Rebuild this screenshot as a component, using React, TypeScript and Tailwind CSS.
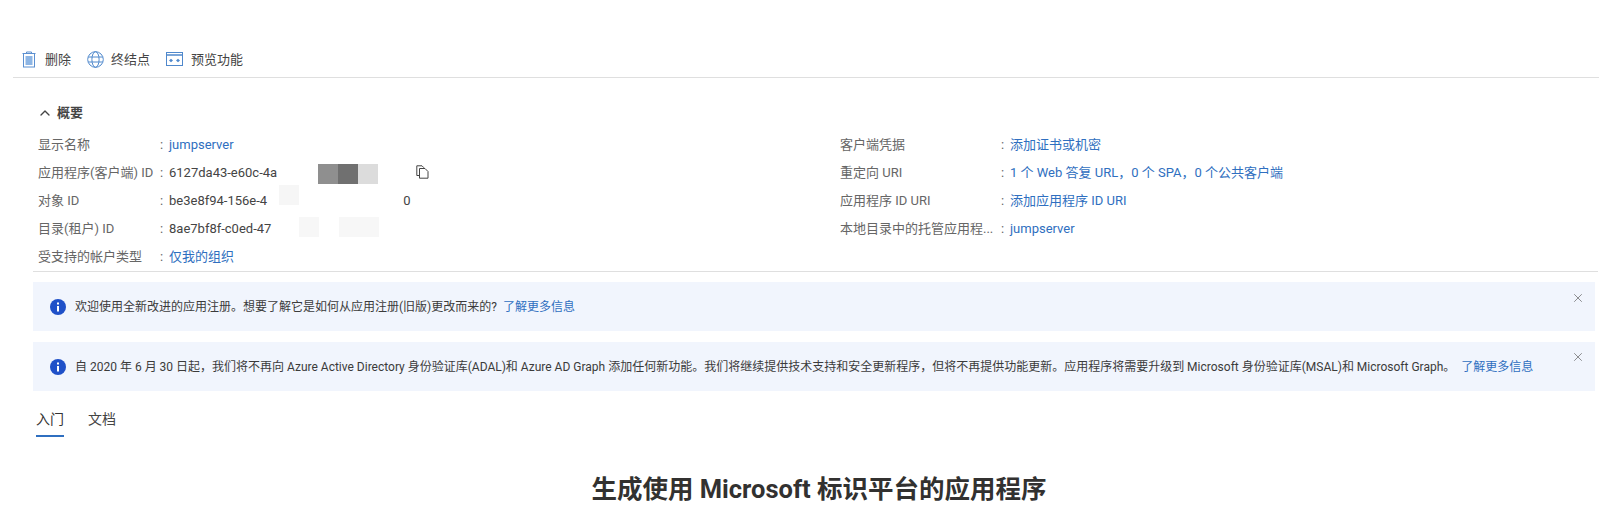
import { ChevronUp, X } from 'lucide-react';

const font = { fontFamily: 'Roboto, "Noto Sans CJK SC", sans-serif' };

const TrashIcon = () => (
  <svg width="14" height="17" viewBox="0 0 14 17" fill="none" className="shrink-0">
    <path d="M4.5 2.5V1h5v1.5M0.5 2.5h13" stroke="#5b8fd0" strokeWidth="1" />
    <rect x="1.5" y="2.5" width="11" height="13.5" stroke="#5b8fd0" strokeWidth="1" />
    <rect x="3.5" y="5" width="7" height="9" fill="#8db5e4" />
  </svg>
);

const GlobeIcon = () => (
  <svg width="17" height="17" viewBox="0 0 17 17" fill="none" stroke="#4f88cc" strokeWidth="1" className="shrink-0">
    <circle cx="8.5" cy="8.5" r="7.8" />
    <ellipse cx="8.5" cy="8.5" rx="3.6" ry="7.8" />
    <path d="M1.2 6h14.6M1.2 11h14.6" />
  </svg>
);

const PreviewIcon = () => (
  <svg width="17" height="14" viewBox="0 0 17 14" fill="none" className="shrink-0">
    <rect x="0.5" y="0.5" width="16" height="13" stroke="#4f88cc" />
    <path d="M0.5 3h16" stroke="#4f88cc" strokeWidth="1.5" />
    <path d="M3 8.5l2-1.8 2 1.8-2 1.8zM10 8.5l2-1.8 2 1.8-2 1.8z" fill="#4f88cc" />
  </svg>
);

const InfoIcon = () => (
  <svg width="16" height="16" viewBox="0 0 16 16" className="shrink-0">
    <circle cx="8" cy="8" r="8" fill="#1f50c8" />
    <rect x="7" y="7" width="2" height="5.5" fill="#fff" />
    <rect x="7" y="3.5" width="2" height="2" fill="#fff" />
  </svg>
);

const CopyIcon = () => (
  <svg width="13" height="14" viewBox="0 0 13 14" fill="none" stroke="#444" strokeWidth="1">
    <path d="M3.5 10.5H0.8V0.8H6l2 2" />
    <path d="M3.5 3.5h5.5l3 3v6.7H3.5z" fill="#fff" />
  </svg>
);

function Row({ label, children, labelWidth }: { label: string; children: React.ReactNode; labelWidth: string }) {
  return (
    <div className="flex h-7 items-center text-[13px]">
      <span className={`${labelWidth} shrink-0 whitespace-nowrap text-[#666666]`}>{label}</span>
      <span className="w-[9px] shrink-0 text-[#666666]">:</span>
      {children}
    </div>
  );
}

const Link = ({ children }: { children: React.ReactNode }) => <span className="whitespace-nowrap text-[#2f6fc0]">{children}</span>;

function Banner({ children, closeTop }: { children: React.ReactNode; closeTop: string }) {
  return (
    <div className="relative ml-[33px] mr-1 flex h-[49px] items-center gap-[9px] bg-[#f1f5fd] pl-[17px] text-[12px] text-[#3b3b3b]">
      <InfoIcon />
      <div className="whitespace-nowrap">{children}</div>
      <X className={`absolute right-[10px] ${closeTop} h-[14px] w-[14px] text-[#666666]`} strokeWidth={1.25} />
    </div>
  );
}

export default function App() {
  return (
    <div className="h-[530px] w-[1599px] overflow-hidden bg-white" style={font}>
      <div className="ml-[13px] flex h-[78px] items-end border-b border-[#dfdfdf] pb-[8px] text-[13px] text-[#444444]">
        <div className="ml-[9px] flex items-center gap-[9px]"><TrashIcon /><span>删除</span></div>
        <div className="ml-[16px] flex items-center gap-[7px]"><GlobeIcon /><span>终结点</span></div>
        <div className="ml-[16px] flex items-center gap-[8px]"><PreviewIcon /><span>预览功能</span></div>
      </div>

      <div className="ml-[37px] mt-[25px] flex h-[20px] items-center gap-[4px] text-[13px] font-bold text-[#444444]">
        <ChevronUp className="h-[16px] w-[16px]" strokeWidth={2} />
        <span>概要</span>
      </div>

      <div className="ml-[38px] mt-[8px] flex h-[140px]">
        <div className="w-[802px] shrink-0">
          <Row label="显示名称" labelWidth="w-[122px]"><Link>jumpserver</Link></Row>
          <Row label="应用程序(客户端) ID" labelWidth="w-[122px]">
            <div className="relative flex w-[300px] items-center text-[#444444]">
              <span>6127da43-e60c-4a</span>
              <div className="absolute left-[149px] top-[1px] flex h-5">
                <div className="w-5 bg-[#8f8f8f]" />
                <div className="w-5 bg-[#707070]" />
                <div className="w-5 bg-[#dcdcdc]" />
              </div>
              <div className="absolute left-[247px] top-[2px]"><CopyIcon /></div>
            </div>
          </Row>
          <Row label="对象 ID" labelWidth="w-[122px]">
            <div className="relative flex w-[300px] text-[#444444]">
              <span>be3e8f94-156e-4</span>
              <span className="ml-[136px]">0</span>
              <div className="absolute left-[110px] top-[-6px] h-5 w-5 bg-[#f6f6f6]" />
            </div>
          </Row>
          <Row label="目录(租户) ID" labelWidth="w-[122px]">
            <div className="relative w-[300px] text-[#444444]">
              <span>8ae7bf8f-c0ed-47</span>
              <div className="absolute left-[130px] top-[-2px] h-5 w-5 bg-[#f7f7f7]" />
              <div className="absolute left-[170px] top-[-2px] h-5 w-10 bg-[#f7f7f7]" />
            </div>
          </Row>
          <Row label="受支持的帐户类型" labelWidth="w-[122px]"><Link>仅我的组织</Link></Row>
        </div>
        <div>
          <Row label="客户端凭据" labelWidth="w-[161px]"><Link>添加证书或机密</Link></Row>
          <Row label="重定向 URI" labelWidth="w-[161px]"><Link>1 个 Web 答复 URL，0 个 SPA，0 个公共客户端</Link></Row>
          <Row label="应用程序 ID URI" labelWidth="w-[161px]"><Link>添加应用程序 ID URI</Link></Row>
          <Row label="本地目录中的托管应用程..." labelWidth="w-[161px]"><Link>jumpserver</Link></Row>
        </div>
      </div>

      <div className="ml-[33px] mr-[1px] h-[1px] bg-[#dfdfdf]" />

      <div className="mt-[10px] flex flex-col gap-[11px]">
        <Banner closeTop="top-[9px]">
          欢迎使用全新改进的应用注册。想要了解它是如何从应用注册(旧版)更改而来的? <span className="ml-[3px]"><Link>了解更多信息</Link></span>
        </Banner>
        <Banner closeTop="top-[8px]">
          自 2020 年 6 月 30 日起，我们将不再向 Azure Active Directory 身份验证库(ADAL)和 Azure AD Graph 添加任何新功能。我们将继续提供技术支持和安全更新程序，但将不再提供功能更新。应用程序将需要升级到 Microsoft 身份验证库(MSAL)和 Microsoft Graph。 <span className="ml-[3px]"><Link>了解更多信息</Link></span>
        </Banner>
      </div>

      <div className="ml-[36px] mt-[18px] flex gap-[24px] text-[14px] text-[#444444]">
        <div className="flex h-[28px] w-[28px] items-start justify-center whitespace-nowrap border-b-2 border-[#2f6fc0] text-[#333333]">入门</div>
        <div>文档</div>
      </div>

      <h1 className="mt-[33px] pl-[39px] text-center text-[25.5px] font-bold text-[#323130]">生成使用 Microsoft 标识平台的应用程序</h1>
    </div>
  );
}
